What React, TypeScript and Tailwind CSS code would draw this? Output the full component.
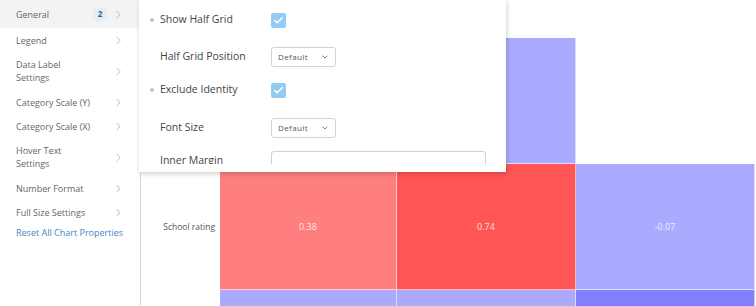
import { ChevronRight, ChevronDown, Check } from 'lucide-react';

type MenuItem = { lines: string[]; h: string; badge?: number; active?: boolean };

const menu: MenuItem[] = [
  { lines: ['General'], h: 'h-[28px]', badge: 2, active: true },
  { lines: ['Legend'], h: 'h-[24px]' },
  { lines: ['Data Label', 'Settings'], h: 'h-[38px]' },
  { lines: ['Category Scale (Y)'], h: 'h-[24px]' },
  { lines: ['Category Scale (X)'], h: 'h-[24px]' },
  { lines: ['Hover Text', 'Settings'], h: 'h-[38px]' },
  { lines: ['Number Format'], h: 'h-[24px]' },
  { lines: ['Full Size Settings'], h: 'h-[24px]' },
];

type Cell = { bg: string; value?: string };

// rows past the bottom edge keep no label; only the middle one shows
const rows: { label: string; cells: (Cell | null)[] }[] = [
  { label: 'Bedrooms', cells: [{ bg: 'bg-[#aaaaff]' }, { bg: 'bg-[#aaaaff]' }, null] },
  {
    label: 'School rating',
    cells: [
      { bg: 'bg-[#ff7f7f]', value: '0.38' },
      { bg: 'bg-[#ff5555]', value: '0.74' },
      { bg: 'bg-[#aaaaff]', value: '-0.07' },
    ],
  },
  { label: '', cells: [{ bg: 'bg-[#aaaaff]' }, { bg: 'bg-[#aaaaff]' }, { bg: 'bg-[#8080ff]' }] },
];

const colW = ['w-[177px]', 'w-[179px]', 'w-[179px]'];

const Sidebar = () => (
  <div className="w-[141px] shrink-0 border-r border-[#d6d6d6] bg-white">
    {menu.map((m) => (
      <div
        key={m.lines.join(' ')}
        className={`flex items-center pl-[16px] pr-[15px] ${m.h} ${m.active ? 'bg-[#f3f3f3]' : ''}`}
      >
        <div className="flex-1 text-[9px] leading-[13px] text-[#666]">
          {m.lines.map((l) => (
            <div key={l}>{l}</div>
          ))}
        </div>
        {m.badge && (
          <span className="mr-[5px] flex h-[14px] w-[14px] items-center justify-center rounded-full bg-[#e2edf8] text-[8px] font-bold text-[#2f5e8c]">
            {m.badge}
          </span>
        )}
        <ChevronRight className="h-[13px] w-[13px] text-[#9a9a9a]" strokeWidth={1.3} />
      </div>
    ))}
    <div className="flex h-[18px] items-center pl-[16px] text-[9px] text-[#3d87c6]">Reset All Chart Properties</div>
  </div>
);

const Dot = () => <span className="absolute left-[11px] h-[4px] w-[4px] rounded-full bg-[#a9cbea]" />;

const CheckBox = () => (
  <span className="flex h-[15px] w-[15px] items-center justify-center rounded-[2px] bg-[#95caf2]">
    <Check className="h-[11px] w-[11px] text-white" strokeWidth={3.5} />
  </span>
);

const Select = () => (
  <span className="flex h-[20px] w-[65px] items-center justify-between rounded-[3px] border border-[#d2d2d2] bg-white pl-[6px] pr-[6px] text-[8px] tracking-[0.4px] text-[#555]">
    Default
    <ChevronDown className="h-[8px] w-[8px] text-[#666]" strokeWidth={2.5} />
  </span>
);

const Popover = () => (
  <div className="absolute left-[139px] top-0 w-[367px] bg-white pb-[8px] shadow-[1px_2px_5px_rgba(0,0,0,0.18)]">
    <div className="h-[164px] overflow-hidden pt-[10px] text-[10.5px] text-[#444]">
      <div className="relative mb-[17px] flex h-[20px] items-center">
        <Dot />
        <span className="w-[132px] pl-[21px]">Show Half Grid</span>
        <CheckBox />
      </div>
      <div className="relative mb-[13px] flex h-[20px] items-center">
        <span className="w-[132px] pl-[21px]">Half Grid Position</span>
        <Select />
      </div>
      <div className="relative mb-[18px] flex h-[20px] items-center">
        <Dot />
        <span className="w-[132px] pl-[21px]">Exclude Identity</span>
        <CheckBox />
      </div>
      <div className="relative mb-[12px] flex h-[20px] items-center">
        <span className="w-[132px] pl-[21px]">Font Size</span>
        <Select />
      </div>
      <div className="relative flex items-start">
        <span className="w-[132px] pl-[21px] leading-[20px]">Inner Margin</span>
        <span className="mt-[1px] h-[26px] w-[215px] rounded-[3px] border border-[#d2d2d2]" />
      </div>
    </div>
  </div>
);

const Heatmap = () => (
  <div className="flex-1 pt-[38px]">
    {rows.map((r, ri) => (
      <div key={ri} className={`flex ${ri === 2 ? 'h-[127px]' : 'h-[126px]'}`}>
        <div className="flex w-[79px] items-center justify-end pr-[5px] text-[8.5px] text-[#555]">{r.label}</div>
        {r.cells.map((c, ci) =>
          c ? (
            <div
              key={ci}
              className={`${colW[ci]} flex items-center justify-center border-b border-r border-white/60 text-[9px] text-white/80 ${c.bg}`}
            >
              {c.value}
            </div>
          ) : (
            <div key={ci} className={colW[ci]} />
          )
        )}
      </div>
    ))}
  </div>
);

export default function App() {
  return (
    <div
      className="relative flex h-[306px] w-[756px] overflow-hidden bg-white"
      style={{ fontFamily: '"Open Sans", "Noto Sans", sans-serif' }}
    >
      <Sidebar />
      <Heatmap />
      <Popover />
    </div>
  );
}
